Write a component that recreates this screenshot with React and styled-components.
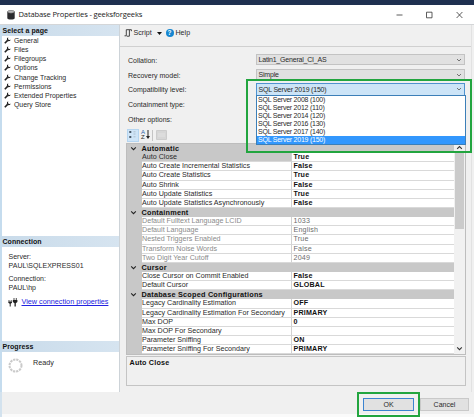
import React from "react";
import styled, { createGlobalStyle } from "styled-components";

const pages = [
	"General",
	"Files",
	"Filegroups",
	"Options",
	"Change Tracking",
	"Permissions",
	"Extended Properties",
	"Query Store",
];

const levels = [
	"SQL Server 2008 (100)",
	"SQL Server 2012 (110)",
	"SQL Server 2014 (120)",
	"SQL Server 2016 (130)",
	"SQL Server 2017 (140)",
	"SQL Server 2019 (150)",
];

const groups = [
	{
		title: "Automatic",
		rows: [
			["Auto Close", "True"],
			["Auto Create Incremental Statistics", "False"],
			["Auto Create Statistics", "True"],
			["Auto Shrink", "False"],
			["Auto Update Statistics", "True"],
			["Auto Update Statistics Asynchronously", "False"],
		],
	},
	{
		title: "Containment",
		disabled: true,
		rows: [
			["Default Fulltext Language LCID", "1033"],
			["Default Language", "English"],
			["Nested Triggers Enabled", "True"],
			["Transform Noise Words", "False"],
			["Two Digit Year Cutoff", "2049"],
		],
	},
	{
		title: "Cursor",
		rows: [
			["Close Cursor on Commit Enabled", "False"],
			["Default Cursor", "GLOBAL"],
		],
	},
	{
		title: "Database Scoped Configurations",
		rows: [
			["Legacy Cardinality Estimation", "OFF"],
			["Legacy Cardinality Estimation For Secondary", "PRIMARY"],
			["Max DOP", "0"],
			["Max DOP For Secondary", ""],
			["Parameter Sniffing", "ON"],
			["Parameter Sniffing For Secondary", "PRIMARY"],
		],
	},
];

const Chevron = ({ up, size = 6, color = "#666" }) => (
	<svg width={size} height={size} viewBox="0 0 6 6" fill="none" stroke={color}>
		<path d={up ? "M1 4.2L3 2.2L5 4.2" : "M1 2L3 4L5 2"} strokeWidth="0.9" />
	</svg>
);

const Wrench = () => (
	<svg width="7" height="7" viewBox="0 0 7 7">
		<path d="M0.8 6.2L3.6 3.4" stroke="#222" strokeWidth="1.6" />
		<path
			d="M4.2 0.3L3 1.2L2.9 3.2L3.8 4.2L5.8 4L6.8 2.8L5.2 3L4 2.2Z"
			fill="#222"
		/>
	</svg>
);

const App = () => {
	return (
		<Screen>
			<GlobalStyle />
			<TopStrip />
			<TitleBar>
				<svg width="8" height="10" viewBox="0 0 8 10">
					<path d="M0.3 1.8V8.2C0.3 10 7.7 10 7.7 8.2V1.8Z" fill="#2b2b2e" />
					<ellipse cx="4" cy="1.8" rx="3.6" ry="1.4" fill="#b9b9bb" stroke="#444" strokeWidth="0.5" />
				</svg>
				<TitleText>Database Properties - geeksforgeeks</TitleText>
				<WindowButtons viewBox="0 0 68 8">
					<path d="M0.5 4H6.5M30.5 1.2H36V6.8H30.5ZM60.6 1L66.4 7M66.4 1L60.6 7" />
				</WindowButtons>
			</TitleBar>
			<Body>
				<Sidebar>
					<SideHeader>Select a page</SideHeader>
					<PageList>
						{pages.map((page) => (
							<PageItem key={page}>
								<Wrench />
								{page}
							</PageItem>
						))}
					</PageList>
					<SideHeader>Connection</SideHeader>
					<Connection>
						<p>Server:</p>
						<Account>PAUL\SQLEXPRESS01</Account>
						<p>Connection:</p>
						<p>PAUL\hp</p>
						<LinkRow>
							<svg width="10" height="9" viewBox="0 0 10 9" fill="#222">
								<path d="M0.3 3.4H4V4.8L2.7 5.8V8.5H1.7V5.8L0.3 4.8ZM4.8 2H9.4V4L7.8 5.2V8.5H6.5V5.2L4.8 4Z" />
								<path d="M6 0V2M8.3 0V2M1 2V3.6M3.2 2V3.6" stroke="#222" strokeWidth="0.8" />
							</svg>
							<Link>View connection properties</Link>
						</LinkRow>
					</Connection>
					<SideHeader>Progress</SideHeader>
					<Progress>
						<svg width="15" height="15" viewBox="0 0 15 15">
							<circle cx="7.5" cy="7.5" r="6" fill="none" stroke="#cacaca" strokeWidth="2" strokeDasharray="2.3 0.84" />
						</svg>
						<span>Ready</span>
					</Progress>
				</Sidebar>
				<Main>
					<Toolbar>
						<svg width="8" height="8" viewBox="0 0 8 8" fill="none" stroke="#333" strokeWidth="0.9">
							<path d="M7.4 2.2V0.7H2.3V6.8H0.5M2.8 7.2H5.4V1" />
						</svg>
						<ScriptLabel>Script</ScriptLabel>
						<svg width="5" height="3" viewBox="0 0 5 3">
							<path d="M0 0H5L2.5 3Z" fill="#111" />
						</svg>
						<HelpMark>?</HelpMark>
						<span>Help</span>
					</Toolbar>
					<Form>
						<Field $h={15}>
							<Label>Collation:</Label>
							<Select>
								Latin1_General_CI_AS
								<Chevron />
							</Select>
						</Field>
						<Field $h={15}>
							<Label>Recovery model:</Label>
							<Select>
								Simple
								<Chevron />
							</Select>
						</Field>
						<Field $h={14}>
							<Label>Compatibility level:</Label>
							<Select $open>
								SQL Server 2019 (150)
								<Chevron />
								<Options>
									{levels.map((level) => (
										<Option key={level} $active={level === levels[5]}>
											{level}
										</Option>
									))}
								</Options>
								<Highlight />
							</Select>
						</Field>
						<Field $h={15}>
							<Label>Containment type:</Label>
						</Field>
						<Field $h={16}>
							<Label>Other options:</Label>
						</Field>
					</Form>
					<GridTools>
						<ToolButton>
							<svg width="10" height="10" viewBox="0 0 10 10">
								<path d="M1.3 1H3.3V3H1.3ZM1.3 6H3.3V8H1.3Z" fill="#4a5a6a" />
								<path d="M5.5 1.8H7.5M5.5 4H7.5M5.5 6.8H7.5" stroke="#a5b5c4" strokeWidth="0.8" />
							</svg>
						</ToolButton>
						<SortLetters>
							<span>A</span>
							<span>Z</span>
						</SortLetters>
						<svg width="4" height="10" viewBox="0 0 4 10">
							<path d="M2 0V7" stroke="#222" />
							<path d="M0 6H4L2 9Z" fill="#222" />
						</svg>
						<Divider />
						<svg width="11" height="10" viewBox="0 0 11 10">
							<path d="M0.5 0.5H10.5V9.5H0.5Z" fill="#d6d6d6" stroke="#cccccc" />
							<path d="M2 4H9M2 6H9" stroke="#e2e2e2" />
						</svg>
					</GridTools>
					<Grid>
						<GridRows>
							{groups.map((group) => (
								<React.Fragment key={group.title}>
									<GroupRow>
										<Gutter>
											<Chevron size={7} color="#222" />
										</Gutter>
										{group.title}
									</GroupRow>
									{group.rows.map(([name, value]) => (
										<Row key={name} $disabled={group.disabled}>
											<Gutter />
											<Name $selected={name === "Auto Close"}>{name}</Name>
											<Value $disabled={group.disabled}>{value}</Value>
										</Row>
									))}
								</React.Fragment>
							))}
						</GridRows>
						<ScrollBar>
							<Chevron up size={7} color="#333" />
							<Thumb />
							<Chevron size={7} color="#333" />
						</ScrollBar>
					</Grid>
					<Description>Auto Close</Description>
				</Main>
			</Body>
			<Footer>
				<OkFrame>
					<Button $primary>OK</Button>
				</OkFrame>
				<Button>Cancel</Button>
			</Footer>
		</Screen>
	);
};

const GlobalStyle = createGlobalStyle`
	* {
		box-sizing: border-box;
	}
	body {
		margin: 0;
		overflow: hidden;
	}
	p {
		margin: 0;
	}
	svg {
		display: block;
		flex: none;
	}
`;
const Screen = styled.div`
	display: flex;
	flex-direction: column;
	width: 474px;
	height: 417px;
	overflow: hidden;
	background-color: #f0f0f0;
	font-family: "Liberation Sans", Arial, sans-serif;
	font-size: 7px;
	line-height: 9px;
	color: #2a2a2a;
	white-space: nowrap;
`;
const TopStrip = styled.div`
	height: 5px;
	flex: none;
	background-color: #1f3050;
`;
const TitleBar = styled.div`
	display: flex;
	align-items: center;
	flex: none;
	height: 19px;
	padding-left: 7px;
	background-color: #fff;
`;
const TitleText = styled.span`
	flex: 1;
	margin-left: 3.5px;
	font-family: "Open Sans", "Noto Sans", sans-serif;
	font-size: 7.6px;
	letter-spacing: -0.16px;
	color: #222;
`;
const WindowButtons = styled.svg`
	width: 68px;
	height: 8px;
	margin-right: 10px;
	fill: none;
	stroke: #333;
	stroke-width: 0.8;
`;
const Body = styled.div`
	display: flex;
	flex: none;
	height: 369px;
	border-top: 1px solid #d4d6d8;
	border-bottom: 1px solid #c8c8c8;
`;
const Sidebar = styled.div`
	display: flex;
	flex-direction: column;
	width: 120px;
	flex: none;
	border-left: 2px solid #c5dcee;
	border-right: 1px solid #cdd3d8;
	background-color: #fff;
`;
const SideHeader = styled.div`
	height: 11px;
	flex: none;
	padding-left: 0.5px;
	background: linear-gradient(90deg, #c9dbea, #d6e4f0);
	font-size: 7px;
	font-weight: 700;
	letter-spacing: 0.06px;
	line-height: 11px;
	color: #111;
`;
const PageList = styled.div`
	height: 200px;
	flex: none;
`;
const PageItem = styled.div`
	display: flex;
	align-items: center;
	gap: 3px;
	height: 9.15px;
	padding-left: 2px;
	font-size: 6.9px;
`;
const Connection = styled.div`
	height: 94px;
	flex: none;
	padding: 6px 0 0 6.5px;
	line-height: 8.5px;
`;
const Account = styled.p`
	margin-bottom: 5px;
	letter-spacing: 0.03px;
`;
const LinkRow = styled.div`
	display: flex;
	align-items: center;
	gap: 4px;
	margin: 6px 0 0 -1px;
`;
const Link = styled.span`
	font-size: 7.25px;
	color: #2222e0;
	text-decoration: underline;
`;
const Progress = styled.div`
	display: flex;
	gap: 10px;
	padding: 6px 0 0 6px;
	font-size: 7.2px;
`;
const Main = styled.div`
	display: flex;
	flex-direction: column;
	width: 352px;
	flex: none;
	border-right: 1px solid #e2e2e2;
`;
const Toolbar = styled.div`
	display: flex;
	align-items: center;
	height: 22px;
	flex: none;
	padding: 0 0 5px 4px;
	border-bottom: 1px solid #d0d0d0;
	font-size: 7.1px;
`;
const ScriptLabel = styled.span`
	width: 18px;
	margin: 0 5px 0 1.5px;
`;
const HelpMark = styled.span`
	width: 8px;
	height: 8px;
	margin: 0 2px 0 4px;
	border-radius: 50%;
	background-color: #1686d0;
	font-size: 6.5px;
	font-weight: 700;
	line-height: 8px;
	text-align: center;
	color: #fff;
`;
const Form = styled.div`
	height: 80px;
	flex: none;
	padding: 5px 6px 0 8px;
`;
const Field = styled.div`
	display: flex;
	align-items: center;
	height: ${({ $h }) => $h}px;
`;
const Label = styled.span`
	width: 128px;
	flex: none;
	padding-top: 1px;
	font-size: 7px;
`;
const Select = styled.div`
	position: relative;
	display: flex;
	align-items: center;
	justify-content: space-between;
	width: 210px;
	height: ${({ $open }) => ($open ? 13 : 11)}px;
	padding: 0 2px 0 1.5px;
	border: 1px solid ${({ $open }) => ($open ? "#4f93cf" : "#c3c3c3")};
	background-color: ${({ $open }) => ($open ? "#cce4f7" : "#e1e1e1")};
	font-size: 7px;
	letter-spacing: -0.2px;
`;
const Options = styled.div`
	position: absolute;
	z-index: 1;
	top: 11px;
	left: -1px;
	width: 210px;
	border: 1px solid #3c7fb8;
	background-color: #fff;
	letter-spacing: -0.24px;
`;
const Option = styled.div`
	height: 8.15px;
	padding-left: 1px;
	line-height: 8.15px;
	background-color: ${({ $active }) => ($active ? "#3297fd" : "#fff")};
	color: ${({ $active }) => ($active ? "#fff" : "#2a2a2a")};
`;
// green marker drawn over the form
const Highlight = styled.div`
	position: absolute;
	z-index: 2;
	top: -5px;
	left: -11px;
	width: 226px;
	height: 74px;
	border: 2px solid #22a53f;
`;
const GridTools = styled.div`
	display: flex;
	align-items: center;
	height: 16px;
	flex: none;
	padding-left: 7px;
`;
const ToolButton = styled.div`
	display: flex;
	align-items: center;
	justify-content: center;
	width: 12px;
	height: 13px;
	border: 1px solid #b5d5f0;
	background-color: #cfe5f8;
`;
const SortLetters = styled.div`
	display: flex;
	flex-direction: column;
	margin: 0 1px 0 2px;
	font-size: 6px;
	line-height: 5.5px;

	span:first-child {
		color: #2a62a8;
	}
`;
const Divider = styled.div`
	width: 1px;
	height: 11px;
	margin: 0 3px 0 2px;
	background-color: #c4c4c4;
`;
const Grid = styled.div`
	display: flex;
	height: 212px;
	flex: none;
	margin: 0 5px 0 6px;
	border: 1px solid #bdbdbd;
`;
const GridRows = styled.div`
	flex: 1;
	font-size: 7.15px;
`;
const GroupRow = styled.div`
	display: flex;
	height: 9.15px;
	background-color: #c8c8c8;
	font-size: 7.3px;
	font-weight: 700;
	letter-spacing: 0.22px;
	color: #111;
`;
const Gutter = styled.div`
	width: 14px;
	flex: none;
	margin-right: 0.5px;
	padding: 1px 0 0 3px;
	background-color: #c8c8c8;
`;
const Row = styled.div`
	display: flex;
	height: 9.15px;
	background-color: #c8c8c8;
	color: ${({ $disabled }) => ($disabled ? "#8a8a8a" : "#2a2a2a")};
`;
const Name = styled.div`
	width: 150.5px;
	flex: none;
	padding-left: 0.5px;
	border-right: 1px solid #d2d2d2;
	border-bottom: 1px solid #d9d9d9;
	background-color: ${({ $selected }) => ($selected ? "#c8c8c8" : "#fff")};
`;
const Value = styled.div`
	flex: 1;
	padding-left: 1.5px;
	border-bottom: 1px solid #d9d9d9;
	background-color: #fff;
	font-weight: ${({ $disabled }) => ($disabled ? 400 : 700)};
	letter-spacing: 0.18px;
	color: ${({ $disabled }) => ($disabled ? "#6c6c6c" : "#111")};
`;
const ScrollBar = styled.div`
	display: flex;
	flex-direction: column;
	align-items: center;
	width: 11px;
	flex: none;
	background-color: #f1f1f1;

	svg:last-child {
		margin: auto 0 2px;
	}
`;
const Thumb = styled.div`
	width: 9px;
	height: 76px;
	margin-top: 2px;
	background-color: #cbcbcb;
`;
const Description = styled.div`
	height: 30px;
	flex: none;
	margin: 1px 5px 0 6px;
	padding: 1px 2.5px;
	border: 1px solid #c4c4c4;
	font-size: 7.2px;
	font-weight: 700;
	letter-spacing: 0.2px;
	color: #111;
`;
const Footer = styled.div`
	display: flex;
	align-items: flex-start;
	justify-content: flex-end;
	flex: 1;
	margin-top: -1px;
	padding-right: 5px;
	border-left: 2px solid #d3e2ee;
	background: linear-gradient(#f0f0f0 0 22px, #fafafa 22px);

	> button {
		margin: 6px 0 0;
	}
`;
const OkFrame = styled.div`
	display: flex;
	width: 63px;
	height: 25px;
	padding: 4px;
	border: 2px solid #22a53f;
`;
const Button = styled.button`
	width: ${({ $primary }) => ($primary ? 51 : 49)}px;
	height: 13px;
	padding: 0;
	border: ${({ $primary }) =>
		$primary ? "1px solid #3c84d0" : "1px solid #c9c9c9"};
	background-color: #e1e1e1;
	font-family: "Liberation Sans", Arial, sans-serif;
	font-size: 7px;
	line-height: 10px;
	color: #2a2a2a;
`;

export default App;
